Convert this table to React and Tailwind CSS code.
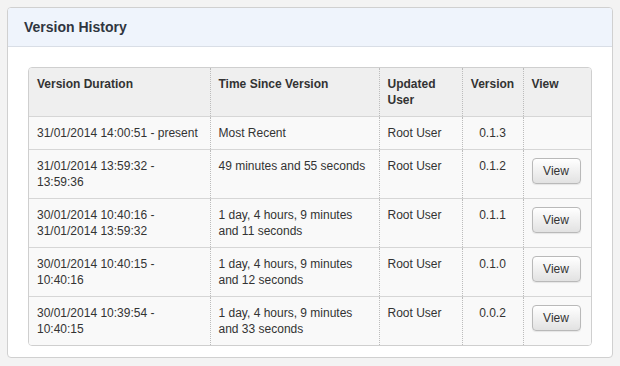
const rows = [
  { duration: '31/01/2014 14:00:51 - present', since: 'Most Recent', user: 'Root User', version: '0.1.3', view: false },
  { duration: '31/01/2014 13:59:32 - 13:59:36', since: '49 minutes and 55 seconds', user: 'Root User', version: '0.1.2', view: true },
  { duration: '30/01/2014 10:40:16 - 31/01/2014 13:59:32', since: '1 day, 4 hours, 9 minutes and 11 seconds', user: 'Root User', version: '0.1.1', view: true },
  { duration: '30/01/2014 10:40:15 - 10:40:16', since: '1 day, 4 hours, 9 minutes and 12 seconds', user: 'Root User', version: '0.1.0', view: true },
  { duration: '30/01/2014 10:39:54 - 10:40:15', since: '1 day, 4 hours, 9 minutes and 33 seconds', user: 'Root User', version: '0.0.2', view: true },
]

function App() {
  return (
    <div className="min-h-[366px] w-[620px] bg-[#f3f3f3] p-[7px] font-['Liberation_Sans',Arial,sans-serif] text-[12px] leading-[16px] text-[#333]">
      <div className="w-[606px] overflow-hidden rounded-[4px] border border-[#d0d0d0] bg-white">
        <div className="flex h-[39px] items-center border-b border-[#d9dee6] bg-[#eff4fc] px-[16px]">
          <h2 className="text-[14px] font-bold text-[#2f3540]">Version History</h2>
        </div>
        <div className="px-[20px] pb-[11px] pt-[20px]">
          <div className="overflow-hidden rounded-[4px] border border-[#cfcfcf]">
            <table className="w-full table-fixed border-collapse">
              <colgroup>
                <col className="w-[181px]" />
                <col className="w-[169px]" />
                <col className="w-[83px]" />
                <col className="w-[61px]" />
                <col />
              </colgroup>
              <thead>
                <tr className="bg-[#efefef] text-left align-top font-bold">
                  <th className="px-[8px] py-[8px]">Version Duration</th>
                  <th className="border-l border-dotted border-[#bcbcbc] px-[8px] py-[8px]">Time Since Version</th>
                  <th className="border-l border-dotted border-[#bcbcbc] px-[8px] py-[8px]">Updated User</th>
                  <th className="border-l border-dotted border-[#bcbcbc] px-[8px] py-[8px] text-center">Version</th>
                  <th className="border-l border-dotted border-[#bcbcbc] px-[8px] py-[8px]">View</th>
                </tr>
              </thead>
              <tbody>
                {rows.map((row) => (
                  <tr key={row.version} className="border-t border-[#d6d6d6] bg-[#f9f9f9] align-top">
                    <td className="px-[8px] py-[8px]">{row.duration}</td>
                    <td className="border-l border-dotted border-[#bcbcbc] px-[8px] py-[8px]">{row.since}</td>
                    <td className="border-l border-dotted border-[#bcbcbc] px-[8px] py-[8px]">{row.user}</td>
                    <td className="border-l border-dotted border-[#bcbcbc] px-[8px] py-[8px] text-center">{row.version}</td>
                    <td className="border-l border-dotted border-[#bcbcbc] px-[8px] py-[8px]">
                      {row.view && (
                        <button
                          type="button"
                          className="h-[26px] w-[49px] rounded-[4px] border border-[#b9b9b9] bg-gradient-to-b from-white to-[#e2e2e2] text-[12px] text-[#333] shadow-[0_1px_1px_rgba(0,0,0,0.08)]"
                        >
                          View
                        </button>
                      )}
                    </td>
                  </tr>
                ))}
              </tbody>
            </table>
          </div>
        </div>
      </div>
    </div>
  )
}

export default App
